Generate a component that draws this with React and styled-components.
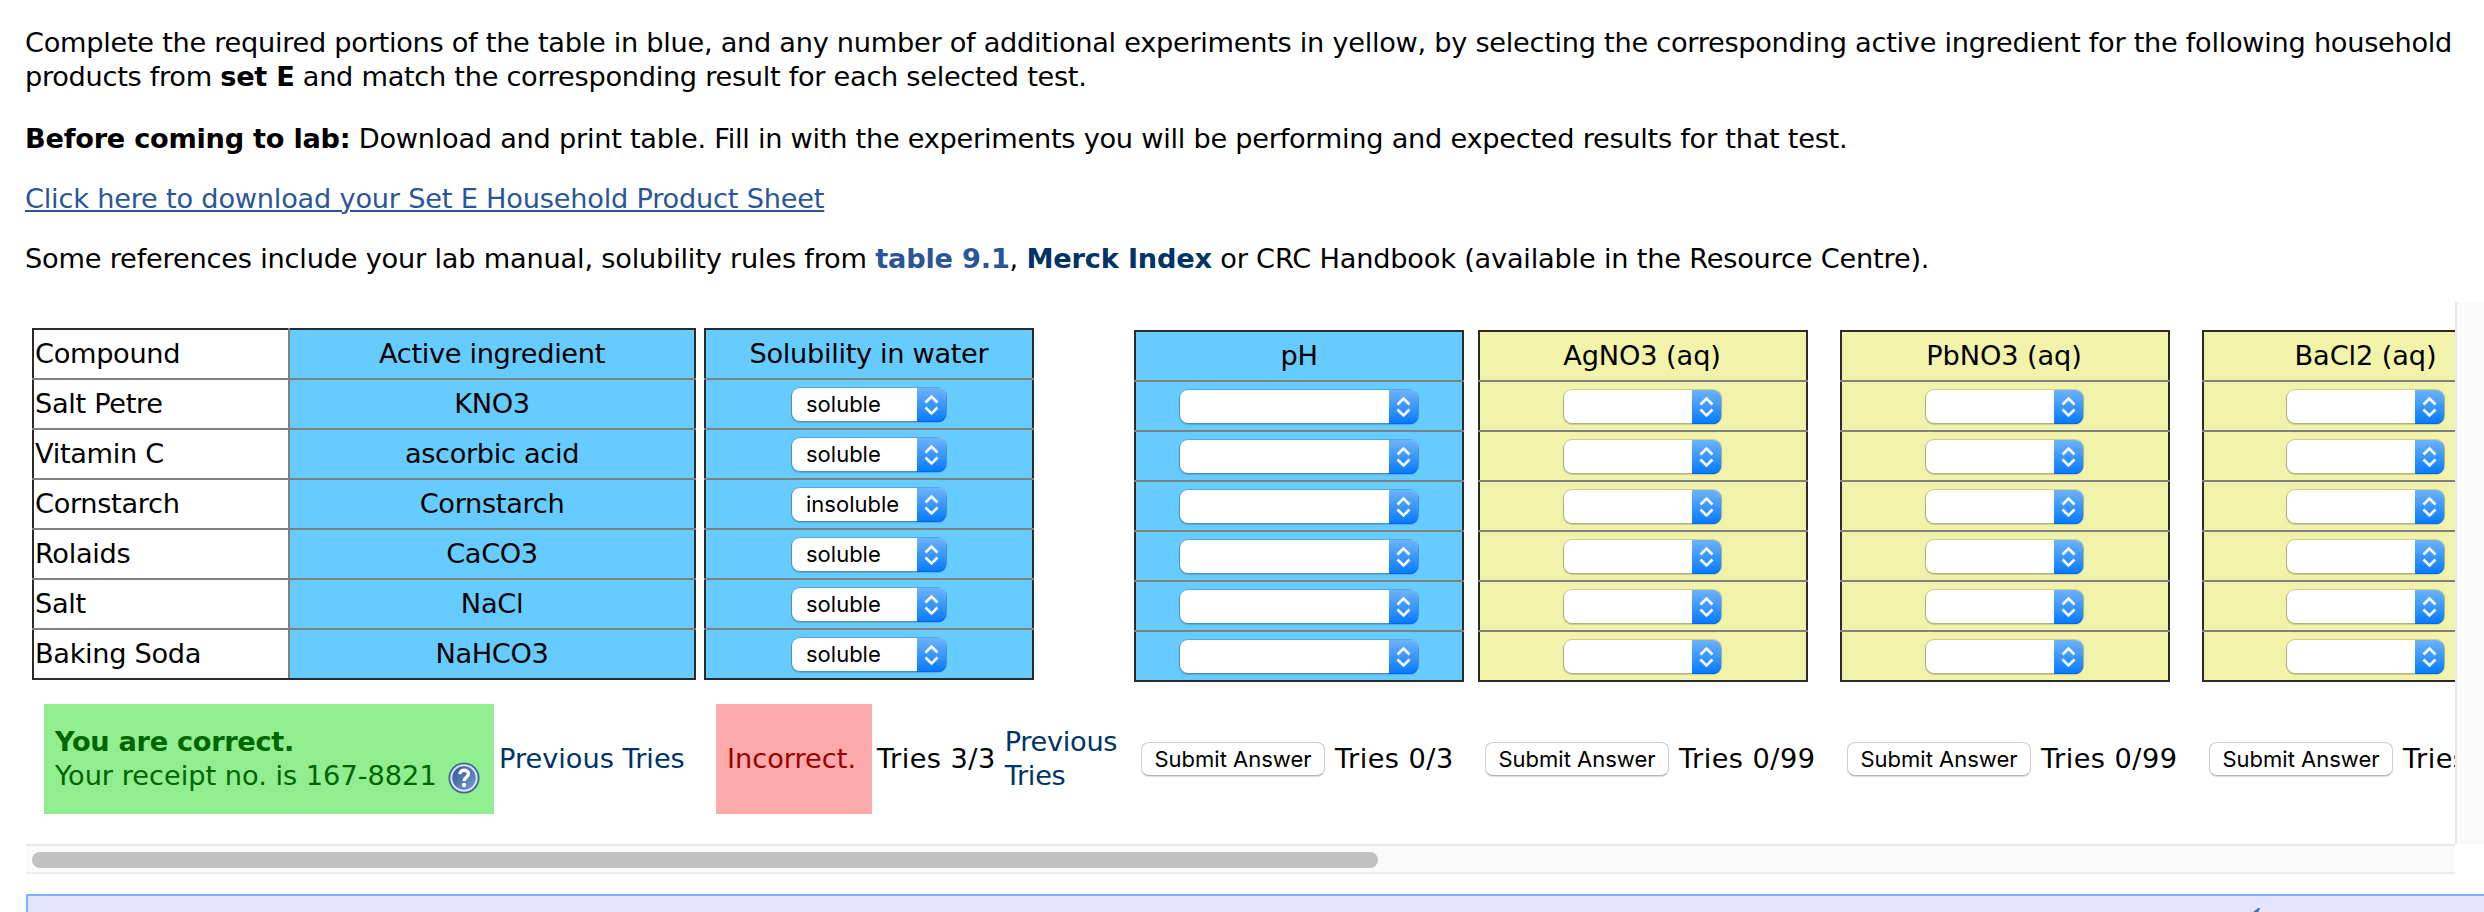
import styled, { createGlobalStyle } from "styled-components";

const GlobalStyle = createGlobalStyle`
  * {
    box-sizing: border-box;
  }

  html,
  body {
    margin: 0;
    background-color: white;
    overflow: hidden;
  }
`;

const Page = styled.div`
  width: 2484px;
  height: 912px;
  padding: 26px 0 0 26px;
  overflow: hidden;
  color: black;
  font-family: Verdana, "DejaVu Sans", sans-serif;
  font-size: 27.2px;
  line-height: 34px;
  white-space: nowrap;
`;

const Paragraph = styled.p`
  margin: 0 0 0 -1px;
  height: ${({ $height }) => $height}px;
`;

const Line = styled.span`
  display: block;
  width: fit-content;
  letter-spacing: ${({ $spacing = -0.26 }) => $spacing}px;
`;

const Link = styled.a`
  color: ${({ $dark }) => ($dark ? "#003366" : "#2a5699")};
  font-weight: ${({ $bold }) => ($bold ? 700 : 400)};
  text-decoration: ${({ $underline }) => ($underline ? "underline" : "none")};
  text-decoration-thickness: 2px;
  text-underline-offset: 2px;
`;

const Viewport = styled.div`
  display: flex;
  height: 542px;
`;

const Scroller = styled.div`
  width: 2429px;
  padding-left: 6px;
  overflow: hidden;
`;

const VerticalTrack = styled.div`
  flex: 1;
  border-left: 2px solid #e8e8e8;
  background-color: #fafafa;
`;

const Experiments = styled.div`
  display: flex;
  width: 2600px;
`;

const Experiment = styled.div`
  flex: none;
  width: ${({ $width }) => $width}px;
  padding-top: ${({ $top }) => $top}px;
`;

const Table = styled.table`
  width: ${({ $width }) => $width}px;
  table-layout: fixed;
  border-collapse: collapse;
  border: 2px solid #2b2b2b;
`;

const colors = {
  white: "#ffffff",
  blue: "#66ccff",
  yellow: "#f2f3aa",
};

const Cell = styled.td`
  width: ${({ $width }) => ($width ? `${$width}px` : "auto")};
  height: 50px;
  padding: 0 ${({ $color }) => ($color === "yellow" ? 3 : 1)}px 1px 1px;
  border: 2px solid #808080;
  background-color: ${({ $color }) => colors[$color]};
  letter-spacing: ${({ $color }) => ($color === "yellow" ? -0.1 : -0.32)}px;
  text-align: ${({ $color }) => ($color === "white" ? "left" : "center")};

  tr:first-child > & {
    border-top-color: #2b2b2b;
  }

  tr:last-child > & {
    border-bottom-color: #2b2b2b;
  }

  &:first-child {
    border-left-color: #2b2b2b;
  }

  &:last-child {
    border-right-color: #2b2b2b;
  }

  & + & {
    border-left-color: #808080;
  }
`;

const Select = styled.div`
  display: flex;
  width: ${({ $width }) => $width}px;
  height: 33px;
  margin: 2px auto 0;
  border-radius: 8px;
  background-color: white;
  box-shadow: 0 0 0 1px rgba(0, 0, 0, 0.14), 0 1px 1px 1px rgba(0, 0, 0, 0.16);
  font-family: Inter, sans-serif;
  font-size: 22px;
  letter-spacing: 0;
  line-height: 33px;
`;

const SelectValue = styled.span`
  flex: 1;
  padding-left: 14px;
  text-align: left;
`;

const SelectArrows = styled.span`
  display: flex;
  align-items: center;
  justify-content: center;
  width: 29px;
  height: 34px;
  border-radius: 0 8px 8px 0;
  background: linear-gradient(#6db3fa, #057aff);
  box-shadow: inset 0 -1px 0 #0066f5;
`;

const ResultList = styled.div`
  display: flex;
  width: 2600px;
  padding-top: 22px;
`;

const ResultGroup = styled.div`
  display: flex;
  flex: none;
  align-items: center;
  width: ${({ $width }) => $width}px;
  height: 110px;
  padding-left: ${({ $left = 0 }) => $left}px;
`;

const Feedback = styled.div`
  display: flex;
  flex: none;
  flex-direction: column;
  justify-content: center;
  width: ${({ $width }) => $width}px;
  height: 110px;
  padding-left: 11px;
  background-color: ${({ $correct }) => ($correct ? "#90ee90" : "#ffaaaa")};
  color: ${({ $correct }) => ($correct ? "#006600" : "#990000")};
`;

const Verdict = styled.b`
  letter-spacing: -0.3px;
`;

const Receipt = styled.div`
  display: flex;
  align-items: center;
  gap: 11px;
  height: 34px;
`;

const HelpIcon = styled.svg`
  width: 32px;
  height: 32px;
  margin-top: 4px;
`;

const Previous = styled(Link)`
  width: ${({ $width }) => $width}px;
  margin-left: ${({ $gap }) => $gap}px;
  letter-spacing: ${({ $spacing }) => $spacing}px;
  white-space: normal;
`;

const Tries = styled.span`
  margin-left: ${({ $gap }) => $gap}px;
  letter-spacing: 0.45px;
`;

const SubmitButton = styled.button`
  width: 184px;
  height: 34px;
  margin-left: 7px;
  padding: 0;
  border: 1px solid #cfcfcf;
  border-bottom-color: #b5b5b5;
  border-radius: 8px;
  background-color: white;
  box-shadow: 0 1px 1px rgba(0, 0, 0, 0.14);
  color: black;
  font-family: Inter, sans-serif;
  font-size: 22px;
  line-height: 30px;
`;

const HorizontalTrack = styled.div`
  width: 2429px;
  height: 30px;
  padding: 6px;
  border-top: 2px solid #e8e8e8;
  border-bottom: 2px solid #ededed;
  background-color: #fafafa;
`;

const Thumb = styled.div`
  width: 1346px;
  height: 16px;
  border-radius: 8px;
  background-color: #c1c1c1;
`;

const Panel = styled.div`
  height: 40px;
  margin-top: 20px;
  padding: 12px 0 0 2224px;
  border-top: 2px solid #75b5f8;
  border-left: 2px solid #75b5f8;
  background-color: #e4e4fe;
`;

const PanelIcon = styled.svg`
  display: block;
  width: 14px;
  height: 14px;
`;

const compounds = [
  ["Compound", "Active ingredient"],
  ["Salt Petre", "KNO3"],
  ["Vitamin C", "ascorbic acid"],
  ["Cornstarch", "Cornstarch"],
  ["Rolaids", "CaCO3"],
  ["Salt", "NaCl"],
  ["Baking Soda", "NaHCO3"],
];

const solubilities = [
  "soluble",
  "soluble",
  "insoluble",
  "soluble",
  "soluble",
  "soluble",
];

const blank = ["", "", "", "", "", ""];

const tests = [
  { title: "pH", color: "blue", width: 344, table: 330, select: 238, tries: "0/3" },
  { title: "AgNO3 (aq)", color: "yellow", width: 362, table: 330, select: 157, tries: "0/99" },
  { title: "PbNO3 (aq)", color: "yellow", width: 362, table: 330, select: 157, tries: "0/99" },
  { title: "BaCl2 (aq)", color: "yellow", width: 362, table: 329, select: 157, tries: "0/99" },
];

function Dropdown({ value, width }) {
  return (
    <Select $width={width}>
      <SelectValue>{value}</SelectValue>
      <SelectArrows>
        <svg width="15" height="22" viewBox="0 0 15 22" fill="none" stroke="white" strokeWidth="2.6">
          <path d="M1.5 8.5l6-6 6 6M1.5 13.5l6 6 6-6" />
        </svg>
      </SelectArrows>
    </Select>
  );
}

function TestTable({ title, color, width, select, values }) {
  return (
    <Table $width={width}>
      <tbody>
        <tr>
          <Cell $color={color}>{title}</Cell>
        </tr>
        {values.map((value, index) => (
          <tr key={index}>
            <Cell $color={color}>
              <Dropdown value={value} width={select} />
            </Cell>
          </tr>
        ))}
      </tbody>
    </Table>
  );
}

function Help() {
  return (
    <HelpIcon viewBox="0 0 32 32">
      <defs>
        <linearGradient id="help" x1="0" y1="0" x2="1" y2="1">
          <stop offset="0" stopColor="#2c5596" />
          <stop offset="1" stopColor="#7b9ccb" />
        </linearGradient>
      </defs>
      <circle cx="16" cy="16" r="15.5" fill="#3f669f" />
      <circle cx="16" cy="16" r="13.7" fill="#d9e4f3" />
      <circle cx="16" cy="16" r="11.7" fill="url(#help)" />
      <path
        d="M11.8 12.2c0-5.4 8.7-5 8.7-.4 0 3.6-4.5 3.4-4.5 7.2"
        fill="none"
        stroke="white"
        strokeWidth="3.4"
      />
      <circle cx="16" cy="23" r="2.2" fill="white" />
    </HelpIcon>
  );
}

function ResultsRow() {
  return (
    <ResultList>
      <ResultGroup $width={672} $left={12}>
        <Feedback $correct $width={450}>
          <Verdict>You are correct.</Verdict>
          <Receipt>
            Your receipt no. is 167-8821
            <Help />
          </Receipt>
        </Feedback>
        <Previous $dark $width={200} $gap={5} $spacing={0}>
          Previous Tries
        </Previous>
      </ResultGroup>
      <ResultGroup $width={430} $left={12}>
        <Feedback $width={156}>Incorrect.</Feedback>
        <Tries $gap={5}>Tries 3/3</Tries>
        <Previous $dark $width={120} $gap={9} $spacing={-0.3}>
          Previous Tries
        </Previous>
      </ResultGroup>
      {tests.map((test) => (
        <ResultGroup key={test.title} $width={test.width}>
          <SubmitButton type="button">Submit Answer</SubmitButton>
          <Tries $gap={10}>Tries {test.tries}</Tries>
        </ResultGroup>
      ))}
    </ResultList>
  );
}

function App() {
  return (
    <Page>
      <GlobalStyle />
      <Paragraph $height={96}>
        <Line $spacing={-0.28}>
          Complete the required portions of the table in blue, and any number of additional
          experiments in yellow, by selecting the corresponding active ingredient for the following
          household
        </Line>
        <Line $spacing={-0.29}>
          products from <b>set E</b> and match the corresponding result for each selected test.
        </Line>
      </Paragraph>
      <Paragraph $height={60}>
        <Line>
          <b>Before coming to lab:</b> Download and print table. Fill in with the experiments you
          will be performing and expected results for that test.
        </Line>
      </Paragraph>
      <Paragraph $height={60}>
        <Line $spacing={-0.21}>
          <Link $underline>Click here to download your Set E Household Product Sheet</Link>
        </Line>
      </Paragraph>
      <Paragraph $height={60}>
        <Line $spacing={-0.2}>
          Some references include your lab manual, solubility rules from{" "}
          <Link $bold>table 9.1</Link>,{" "}
          <Link $bold $dark>
            Merck Index
          </Link>{" "}
          or CRC Handbook (available in the Resource Centre).
        </Line>
      </Paragraph>
      <Viewport>
        <Scroller>
          <Experiments>
            <Experiment $width={672} $top={26}>
              <Table $width={664}>
                <tbody>
                  {compounds.map(([name, ingredient]) => (
                    <tr key={name}>
                      <Cell $color="white" $width={256}>
                        {name}
                      </Cell>
                      <Cell $color="blue">{ingredient}</Cell>
                    </tr>
                  ))}
                </tbody>
              </Table>
            </Experiment>
            <Experiment $width={430} $top={26}>
              <TestTable
                title="Solubility in water"
                color="blue"
                width={330}
                select={154}
                values={solubilities}
              />
            </Experiment>
            {tests.map((test) => (
              <Experiment key={test.title} $width={test.width} $top={28}>
                <TestTable
                  title={test.title}
                  color={test.color}
                  width={test.table}
                  select={test.select}
                  values={blank}
                />
              </Experiment>
            ))}
          </Experiments>
          <ResultsRow />
        </Scroller>
        <VerticalTrack />
      </Viewport>
      <HorizontalTrack>
        <Thumb />
      </HorizontalTrack>
      <Panel>
        <PanelIcon viewBox="0 0 14 14">
          <path d="M0 5 6 0h2L6 5z" fill="#4a70ac" />
        </PanelIcon>
      </Panel>
    </Page>
  );
}

export default App;
